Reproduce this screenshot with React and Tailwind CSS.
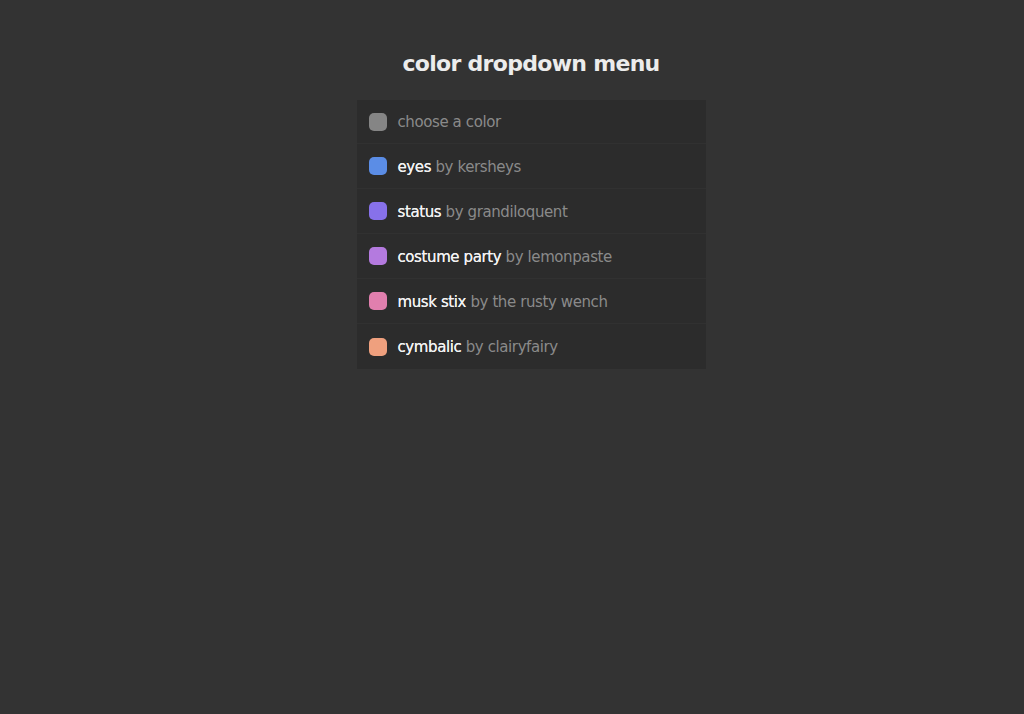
import React from "react";

const items = [
  { name: "eyes", by: "kersheys", color: "#5b8de6" },
  { name: "status", by: "grandiloquent", color: "#8771ea" },
  { name: "costume party", by: "lemonpaste", color: "#b47adf" },
  { name: "musk stix", by: "the rusty wench", color: "#e17fae" },
  { name: "cymbalic", by: "clairyfairy", color: "#efa07e" },
];

export default function App() {
  return (
    <div
      className="min-h-screen w-full bg-[#333333] pl-[38px] pt-[49px] flex flex-col items-center"
      style={{ fontFamily: "'DejaVu Sans', Tahoma, sans-serif" }}
    >
      <h1 className="text-[22px] font-bold text-[#ececec] leading-[30px] tracking-[-0.7px]">
        color dropdown menu
      </h1>
      <ul className="mt-[21px] w-[349px] bg-[#2c2c2c]">
        <li className="flex items-center h-[44px] px-[12px] gap-[11px] border-b border-[#313131]">
          <span className="w-[18px] h-[18px] rounded-[5px] bg-[#858585]" />
          <span className="pt-[2px] text-[15px] text-[#8a8a8a] tracking-[-0.4px]">choose a color</span>
        </li>
        {items.map((it, i) => (
          <li
            key={it.name}
            className={
              "flex items-center h-[45px] px-[12px] gap-[11px] " +
              (i < items.length - 1 ? "border-b border-[#313131]" : "")
            }
          >
            <span className="w-[18px] h-[18px] rounded-[5px]" style={{ background: it.color }} />
            <span className="pt-[2px] text-[15px] tracking-[-0.4px]">
              <span className="text-[#f2f2f2] [text-shadow:0_0_0.4px_#f2f2f2]">{it.name}</span>
              <span className="text-[#8a8a8a]"> by {it.by}</span>
            </span>
          </li>
        ))}
      </ul>
    </div>
  );
}
